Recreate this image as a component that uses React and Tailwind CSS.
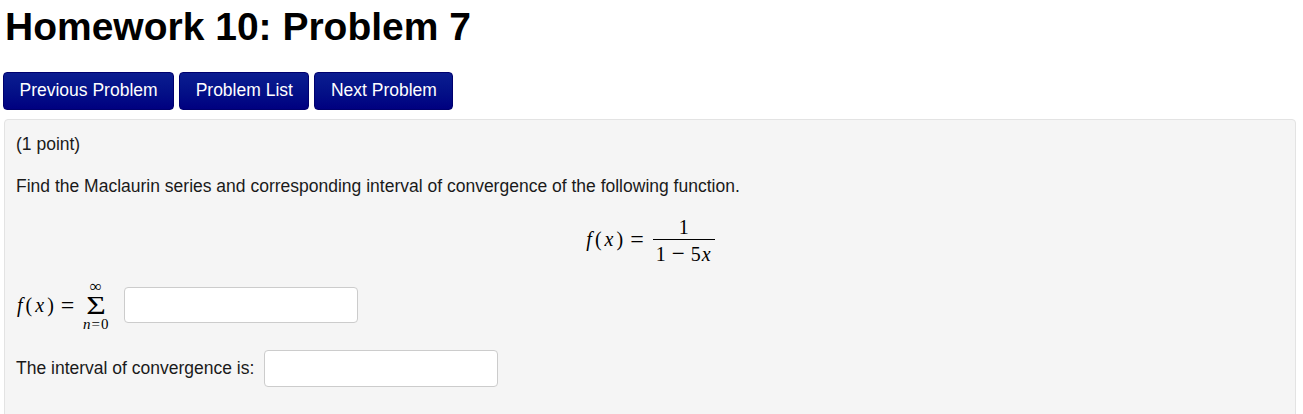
export default function App() {
  const buttons = ['Previous Problem', 'Problem List', 'Next Problem'];

  const fx = (
    <>
      <span className="pl-[1px] pr-[3px] italic">f</span>
      <span>(</span>
      <span className="px-[3px] italic">x</span>
      <span>)</span>
      <span className="mx-[7px] text-[24px] leading-none">=</span>
    </>
  );

  return (
    <div className="min-h-screen bg-white font-['Liberation_Sans',Arial,sans-serif] text-[#1a1a1a]">
      <h1 className="pl-[5px] pt-[5px] text-[39px] font-bold leading-[44px] text-black">
        Homework 10: Problem 7
      </h1>

      <div className="mt-[23px] flex gap-[5px] pl-[3px]">
        {buttons.map((label) => (
          <button
            key={label}
            className="h-[38px] rounded-[4px] border border-[#00006e] bg-gradient-to-b from-[#0c1d90] to-[#000080] px-[15.5px] text-[17.5px] leading-none text-white"
          >
            {label}
          </button>
        ))}
      </div>

      <div className="ml-[4px] mr-[7px] mt-[9px] h-[320px] rounded-[4px] border border-[#e3e3e3] bg-[#f5f5f5] px-[11px] pt-[12px] text-[17.5px] leading-[25px]">
        <p>(1 point)</p>
        <p className="mt-[17px]">
          Find the Maclaurin series and corresponding interval of convergence of the following function.
        </p>

        {/* displayed equation */}
        <div className="mt-[13px] flex h-[54px] items-center justify-center font-['Liberation_Serif','Times_New_Roman',serif] text-[20px] text-black">
          {fx}
          <span className="ml-[2px] inline-flex flex-col items-center">
            <span className="flex h-[26px] items-end pb-[2px] leading-none">1</span>
            <span className="h-px w-[62px] bg-black" />
            <span className="flex h-[26px] items-start pt-[4px] leading-none">
              <span>1</span>
              <span className="mx-[6px] text-[23px] leading-[20px]">−</span>
              <span>5</span>
              <span className="pl-[1px] pr-[1px] italic">x</span>
            </span>
          </span>
        </div>

        {/* series row */}
        <div className="mt-[13px] flex items-center">
          <div className="flex items-center font-['Liberation_Serif','Times_New_Roman',serif] text-[20px] text-black">
            {fx}
            <span className="-ml-[2px] inline-flex w-[33px] flex-col items-center">
              <span className="h-[16px] text-[17px] leading-[16px]">∞</span>
              <span className="flex h-[22px] items-center text-[24px] leading-[22px]">
                <span className="inline-block scale-x-[1.4] scale-y-[1.05]">Σ</span>
              </span>
              <span className="h-[14px] whitespace-nowrap text-[15px] leading-[14px]">
                <span className="pr-[1px] italic">n</span>=<span className="pl-[1px]">0</span>
              </span>
            </span>
          </div>
          <input
            type="text"
            className="ml-[12px] h-[36px] w-[234px] rounded-[4px] border border-[#cccccc] bg-white"
          />
        </div>

        {/* interval row */}
        <div className="mt-[19px] flex items-center">
          <span>The interval of convergence is:</span>
          <input
            type="text"
            className="ml-[10px] h-[37px] w-[234px] rounded-[4px] border border-[#cccccc] bg-white"
          />
        </div>
      </div>
    </div>
  );
}
